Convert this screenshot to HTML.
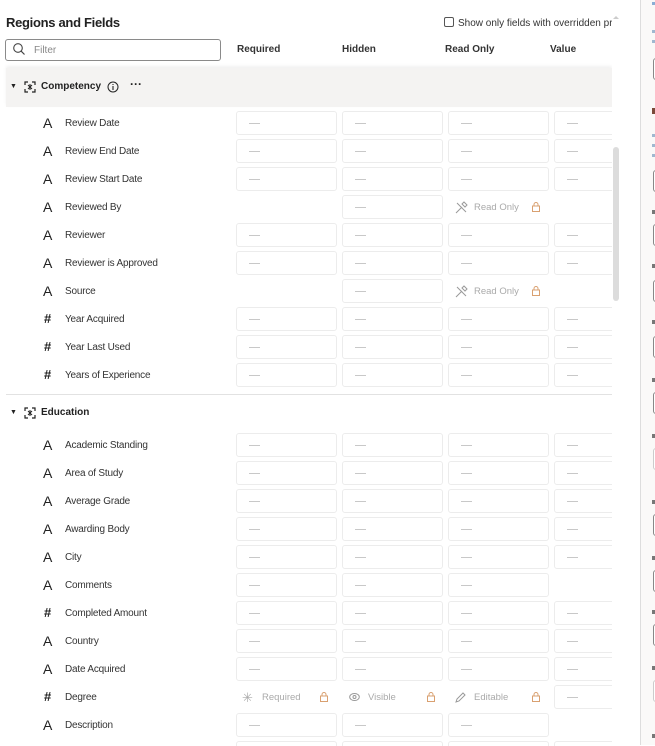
<!DOCTYPE html>
<html><head><meta charset="utf-8"><style>
*{box-sizing:border-box;margin:0;padding:0}
body{width:655px;height:745px;overflow:hidden;background:#fff;font-family:"Liberation Sans",sans-serif;color:#333;position:relative}
.a{position:absolute}
.title{left:6px;top:14px;font-size:13px;font-weight:bold;color:#222;letter-spacing:-0.3px}
.filter{left:5px;top:38px;width:216px;height:22px;border:1px solid #8a8a8a;border-radius:3px;font-size:10px;color:#888;padding:5px 0 0 28px}
.hd{top:43px;font-size:10px;font-weight:bold;color:#333}
.chk{left:444px;top:16px;font-size:10px;color:#333;white-space:nowrap}
.chk i{display:inline-block;width:10px;height:10px;border:1px solid #555;border-radius:2px;vertical-align:-1px;margin-right:4px}
.main{left:0;top:1px;width:612px;height:745px;overflow:hidden}
.band{left:6px;top:67px;width:606px;height:39px;background:#f4f3f2;box-shadow:0 -2px 3px rgba(0,0,0,0.06)}
.grp{font-size:10px;font-weight:bold;color:#222;left:0;width:612px;height:20px;line-height:20px}
.row{left:0;width:612px;height:28px}
.row .ic{position:absolute;left:43px;top:0;line-height:28px;font-size:14px;color:#222}
.row .ic.h{font-size:13px;font-weight:bold;left:44px}
.row .lb{position:absolute;left:65px;top:1px;line-height:28px;font-size:10px;color:#333;letter-spacing:-0.2px}
.c{position:absolute;top:2px;height:24px;border:1px solid #ececec;border-radius:3px;background:#fff}
.c:after{content:"";position:absolute;left:12px;top:11px;width:11px;height:1px;background:#c8c8c8}
.c1{left:236px;width:101px}.c2{left:342px;width:101px}.c3{left:448px;width:101px}.c4{left:554px;width:80px}
.ro{position:absolute;top:1px;line-height:28px;font-size:9.5px;color:#aaa}
.lock{position:absolute;top:9px;width:8px;height:10px}
.sep{left:6px;top:393px;width:606px;height:1px;background:#e2e2e2}
.sb{left:613px;top:147px;width:6px;height:154px;background:#dcdcdc;border-radius:3px}
.rp{left:640px;top:0;width:15px;height:745px;background:#faf9f8;border-left:1px solid #ddd}
.inp{position:absolute;left:12px;width:10px;height:22px;border:1px solid #888;border-radius:3px;background:#fff}
.tiny{position:absolute;left:11px;width:4px;height:3px;background:#bbb}
</style></head><body>
<div class="a main">
<div class="a title">Regions and Fields</div>
<div class="a chk"><i></i>Show only fields with overridden pr</div>
<div class="a filter">Filter</div>
<svg class="a" style="left:12px;top:41px" width="14" height="14" viewBox="0 0 14 14"><circle cx="6" cy="6" r="4.3" fill="none" stroke="#444" stroke-width="1.1"/><path d="M9.2 9.2L12.5 12.5" stroke="#444" stroke-width="1.2"/></svg>
<div class="a hd" style="left:237px">Required</div>
<div class="a hd" style="left:342px">Hidden</div>
<div class="a hd" style="left:445px">Read Only</div>
<div class="a hd" style="left:550px">Value</div>
<div class="a band"></div>
<div class="a grp" style="top:76px"><span class="a" style="left:10px;font-size:7px">▼</span>
<svg class="a" style="left:24px;top:4px" width="12" height="12" viewBox="0 0 12 12"><path d="M1 4V1h3M8 1h3v3M11 8v3H8M4 11H1V8" fill="none" stroke="#222" stroke-width="1.2"/><path d="M4 4l4 4M8 4L4 8M6 3v6" stroke="#222" stroke-width="1"/></svg>
<span class="a" style="left:41px">Competency</span>
<svg class="a" style="left:107px;top:4px" width="12" height="12" viewBox="0 0 12 12"><circle cx="6" cy="6" r="5" fill="none" stroke="#222" stroke-width="1"/><path d="M6 5v4M6 3v1" stroke="#222" stroke-width="1.1"/></svg>
<span class="a" style="left:130px;top:-3px;font-size:12px">···</span></div>

<div class="a row" style="top:108px"><span class="ic">A</span><span class="lb">Review Date</span><div class="c c1"></div><div class="c c2"></div><div class="c c3"></div><div class="c c4"></div></div>
<div class="a row" style="top:136px"><span class="ic">A</span><span class="lb">Review End Date</span><div class="c c1"></div><div class="c c2"></div><div class="c c3"></div><div class="c c4"></div></div>
<div class="a row" style="top:164px"><span class="ic">A</span><span class="lb">Review Start Date</span><div class="c c1"></div><div class="c c2"></div><div class="c c3"></div><div class="c c4"></div></div>
<div class="a row" style="top:192px"><span class="ic">A</span><span class="lb">Reviewed By</span><div class="c c2"></div>
<svg class="a" style="left:455px;top:8px" width="13" height="13" viewBox="0 0 13 13"><path d="M1 12L7 6M2 2l9 9M9 1l3 3-2 2-3-3z" fill="none" stroke="#999" stroke-width="1"/></svg><span class="ro" style="left:474px">Read Only</span>
<svg class="lock" style="left:532px" viewBox="0 0 8 10"><rect x="0.5" y="4" width="7" height="5.5" fill="none" stroke="#d9a070"/><path d="M2 4V2.5a2 2 0 0 1 4 0V4" fill="none" stroke="#d9a070"/></svg></div>
<div class="a row" style="top:220px"><span class="ic">A</span><span class="lb">Reviewer</span><div class="c c1"></div><div class="c c2"></div><div class="c c3"></div><div class="c c4"></div></div>
<div class="a row" style="top:248px"><span class="ic">A</span><span class="lb">Reviewer is Approved</span><div class="c c1"></div><div class="c c2"></div><div class="c c3"></div><div class="c c4"></div></div>
<div class="a row" style="top:276px"><span class="ic">A</span><span class="lb">Source</span><div class="c c2"></div>
<svg class="a" style="left:455px;top:8px" width="13" height="13" viewBox="0 0 13 13"><path d="M1 12L7 6M2 2l9 9M9 1l3 3-2 2-3-3z" fill="none" stroke="#999" stroke-width="1"/></svg><span class="ro" style="left:474px">Read Only</span>
<svg class="lock" style="left:532px" viewBox="0 0 8 10"><rect x="0.5" y="4" width="7" height="5.5" fill="none" stroke="#d9a070"/><path d="M2 4V2.5a2 2 0 0 1 4 0V4" fill="none" stroke="#d9a070"/></svg></div>
<div class="a row" style="top:304px"><span class="ic h">#</span><span class="lb">Year Acquired</span><div class="c c1"></div><div class="c c2"></div><div class="c c3"></div><div class="c c4"></div></div>
<div class="a row" style="top:332px"><span class="ic h">#</span><span class="lb">Year Last Used</span><div class="c c1"></div><div class="c c2"></div><div class="c c3"></div><div class="c c4"></div></div>
<div class="a row" style="top:360px"><span class="ic h">#</span><span class="lb">Years of Experience</span><div class="c c1"></div><div class="c c2"></div><div class="c c3"></div><div class="c c4"></div></div>
<div class="a sep"></div>
<div class="a grp" style="top:402px"><span class="a" style="left:10px;font-size:7px">▼</span>
<svg class="a" style="left:24px;top:4px" width="12" height="12" viewBox="0 0 12 12"><path d="M1 4V1h3M8 1h3v3M11 8v3H8M4 11H1V8" fill="none" stroke="#222" stroke-width="1.2"/><path d="M4 4l4 4M8 4L4 8M6 3v6" stroke="#222" stroke-width="1"/></svg>
<span class="a" style="left:41px">Education</span></div>

<div class="a row" style="top:430px"><span class="ic">A</span><span class="lb">Academic Standing</span><div class="c c1"></div><div class="c c2"></div><div class="c c3"></div><div class="c c4"></div></div>
<div class="a row" style="top:458px"><span class="ic">A</span><span class="lb">Area of Study</span><div class="c c1"></div><div class="c c2"></div><div class="c c3"></div><div class="c c4"></div></div>
<div class="a row" style="top:486px"><span class="ic">A</span><span class="lb">Average Grade</span><div class="c c1"></div><div class="c c2"></div><div class="c c3"></div><div class="c c4"></div></div>
<div class="a row" style="top:514px"><span class="ic">A</span><span class="lb">Awarding Body</span><div class="c c1"></div><div class="c c2"></div><div class="c c3"></div><div class="c c4"></div></div>
<div class="a row" style="top:542px"><span class="ic">A</span><span class="lb">City</span><div class="c c1"></div><div class="c c2"></div><div class="c c3"></div><div class="c c4"></div></div>
<div class="a row" style="top:570px"><span class="ic">A</span><span class="lb">Comments</span><div class="c c1"></div><div class="c c2"></div><div class="c c3"></div></div>
<div class="a row" style="top:598px"><span class="ic h">#</span><span class="lb">Completed Amount</span><div class="c c1"></div><div class="c c2"></div><div class="c c3"></div><div class="c c4"></div></div>
<div class="a row" style="top:626px"><span class="ic">A</span><span class="lb">Country</span><div class="c c1"></div><div class="c c2"></div><div class="c c3"></div><div class="c c4"></div></div>
<div class="a row" style="top:654px"><span class="ic">A</span><span class="lb">Date Acquired</span><div class="c c1"></div><div class="c c2"></div><div class="c c3"></div><div class="c c4"></div></div>
<div class="a row" style="top:682px"><span class="ic h">#</span><span class="lb">Degree</span>
<span class="ro" style="left:242px;font-size:13px;color:#aaa">✳</span><span class="ro" style="left:262px">Required</span>
<svg class="lock" style="left:320px" viewBox="0 0 8 10"><rect x="0.5" y="4" width="7" height="5.5" fill="none" stroke="#d9a070"/><path d="M2 4V2.5a2 2 0 0 1 4 0V4" fill="none" stroke="#d9a070"/></svg>
<svg class="a" style="left:349px;top:9px" width="11" height="10" viewBox="0 0 11 10"><ellipse cx="5.5" cy="5" rx="4.8" ry="3.5" fill="none" stroke="#999"/><circle cx="5.5" cy="5" r="1.5" fill="none" stroke="#999"/></svg><span class="ro" style="left:368px">Visible</span>
<svg class="lock" style="left:427px" viewBox="0 0 8 10"><rect x="0.5" y="4" width="7" height="5.5" fill="none" stroke="#d9a070"/><path d="M2 4V2.5a2 2 0 0 1 4 0V4" fill="none" stroke="#d9a070"/></svg>
<svg class="a" style="left:455px;top:8px" width="12" height="12" viewBox="0 0 12 12"><path d="M1 11l1-3 6-6 2 2-6 6z" fill="none" stroke="#999"/></svg><span class="ro" style="left:474px">Editable</span>
<svg class="lock" style="left:532px" viewBox="0 0 8 10"><rect x="0.5" y="4" width="7" height="5.5" fill="none" stroke="#d9a070"/><path d="M2 4V2.5a2 2 0 0 1 4 0V4" fill="none" stroke="#d9a070"/></svg>
<div class="c c4"></div></div>
<div class="a row" style="top:710px"><span class="ic">A</span><span class="lb">Description</span><div class="c c1"></div><div class="c c2"></div><div class="c c3"></div></div>
<div class="a row" style="top:738px"><div class="c c1"></div><div class="c c2"></div><div class="c c3"></div><div class="c c4"></div></div>
</div>
<div class="a sb"></div>
<svg class="a" style="left:612px;top:14px" width="8" height="6" viewBox="0 0 8 6"><path d="M1 5l3-3 3 3" fill="#ccc"/></svg>
<div class="a rp">
<div class="tiny" style="top:2px;background:#8aaed5"></div>
<div class="tiny" style="top:30px;background:#a0b8d0"></div>
<div class="tiny" style="top:40px;background:#a0b8d0"></div>
<div class="inp" style="top:58px"></div>
<div class="tiny" style="top:108px;height:6px;background:#7a4a3a"></div>
<div class="tiny" style="top:134px;background:#a0b8d0"></div>
<div class="tiny" style="top:144px;background:#a0b8d0"></div>
<div class="tiny" style="top:154px;background:#a0b8d0"></div>
<div class="inp" style="top:170px"></div>
<div class="tiny" style="top:210px;height:4px;background:#777"></div>
<div class="inp" style="top:224px"></div>
<div class="tiny" style="top:264px;height:4px;background:#777"></div>
<div class="inp" style="top:280px"></div>
<div class="tiny" style="top:320px;height:4px;background:#777"></div>
<div class="inp" style="top:336px"></div>
<div class="tiny" style="top:378px;height:4px;background:#777"></div>
<div class="inp" style="top:392px"></div>
<div class="tiny" style="top:434px;height:4px;background:#777"></div>
<div class="inp" style="top:448px;border-color:#ccc"></div>
<div class="tiny" style="top:500px;height:4px;background:#777"></div>
<div class="inp" style="top:514px"></div>
<div class="tiny" style="top:556px;height:4px;background:#777"></div>
<div class="inp" style="top:570px"></div>
<div class="tiny" style="top:610px;height:4px;background:#777"></div>
<div class="inp" style="top:624px"></div>
<div class="tiny" style="top:666px;height:4px;background:#777"></div>
<div class="inp" style="top:680px;border-color:#ccc"></div>
<div class="tiny" style="top:734px;height:4px;background:#777"></div>
</div>
</body></html>
